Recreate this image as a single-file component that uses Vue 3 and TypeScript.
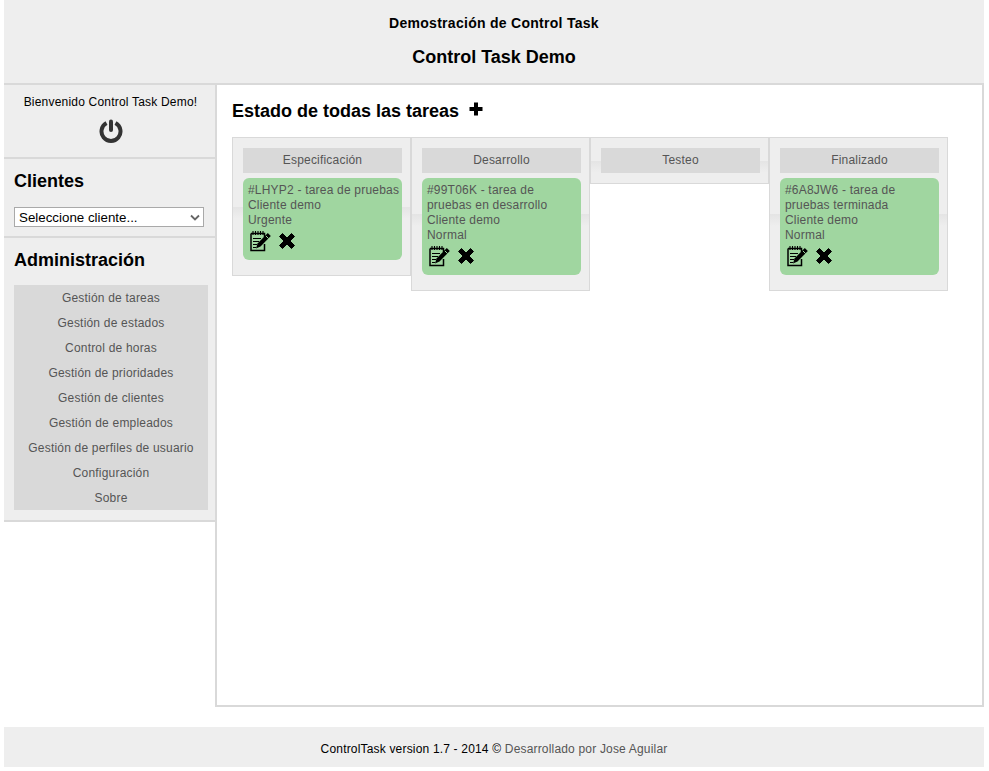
<script setup lang="ts">
type Task = {
  title: string
  client: string
  priority: string
}

type Column = {
  name: string
  tasks: Task[]
}

const adminLinks = [
  'Gestión de tareas',
  'Gestión de estados',
  'Control de horas',
  'Gestión de prioridades',
  'Gestión de clientes',
  'Gestión de empleados',
  'Gestión de perfiles de usuario',
  'Configuración',
  'Sobre',
]

const columns: Column[] = [
  {
    name: 'Especificación',
    tasks: [{ title: '#LHYP2 - tarea de pruebas', client: 'Cliente demo', priority: 'Urgente' }],
  },
  {
    name: 'Desarrollo',
    tasks: [{ title: '#99T06K - tarea de pruebas en desarrollo', client: 'Cliente demo', priority: 'Normal' }],
  },
  { name: 'Testeo', tasks: [] },
  {
    name: 'Finalizado',
    tasks: [{ title: '#6A8JW6 - tarea de pruebas terminada', client: 'Cliente demo', priority: 'Normal' }],
  },
]
</script>

<template>
  <div class="page">
    <header class="top">
      <h1>Demostración de Control Task</h1>
      <h2>Control Task Demo</h2>
    </header>

    <div class="body">
      <aside class="side">
        <section class="welcome">
          <p>Bienvenido Control Task Demo!</p>
          <svg class="power" viewBox="0 0 24 24" width="24" height="24">
            <path
              d="M7.500 4.100 A9.500 9.500 0 1 0 16.500 4.100"
              fill="none"
              stroke="#333"
              stroke-width="4"
            />
            <path d="M12 2.500V11" stroke="#333" stroke-width="4" stroke-linecap="round" />
          </svg>
        </section>

        <section class="clients">
          <h3>Clientes</h3>
          <div class="picker">
            <select>
              <option>Seleccione cliente...</option>
            </select>
            <svg class="chevron" viewBox="0 0 10 7" width="10" height="7">
              <path d="M1 1.500 5 5.500 9 1.500" fill="none" stroke="#666" stroke-width="1.800" />
            </svg>
          </div>
        </section>

        <section class="admin">
          <h3>Administración</h3>
          <nav>
            <a v-for="link in adminLinks" :key="link" href="#">{{ link }}</a>
          </nav>
        </section>
      </aside>

      <main class="content">
        <h2 class="title">
          Estado de todas las tareas
          <svg class="plus" viewBox="0 0 14 14" width="14" height="14">
            <path d="M5 0.500h4v4.500h4.500v4H9v4.500H5V9H0.500V5H5z" fill="#000" />
          </svg>
        </h2>

        <div class="board">
          <section v-for="column in columns" :key="column.name" class="column">
            <h4>{{ column.name }}</h4>
            <article v-for="task in column.tasks" :key="task.title" class="task">
              <div>{{ task.title }}</div>
              <div>{{ task.client }}</div>
              <div>{{ task.priority }}</div>
              <div class="actions">
                <svg viewBox="0 0 22 22" width="22" height="22">
                  <path
                    d="M2 3.500H15.500V7M2 3.500V20.500H15.500V14"
                    fill="none"
                    stroke="#000"
                    stroke-width="1.500"
                  />
                  <path d="M4 1v4M6.500 1v4M9 1v4M11.500 1v4M14 1v4" stroke="#000" stroke-width="1.100" />
                  <path d="M4 8.500h8M4 11.500h6M4 14.500h4M4 17.500h3" stroke="#000" stroke-width="1.200" />
                  <path d="M18.800 3 21.800 6 11.500 16.500 7 18.500 8.500 13.500Z" fill="#000" />
                  <path d="M17 6 19.500 8.500" stroke="#a0d6a0" stroke-width="1" />
                </svg>
                <svg viewBox="0 0 16 16" width="16" height="16">
                  <path
                    d="M3.500 0.500 8 5 12.500 0.500 15.500 3.500 11 8 15.500 12.500 12.500 15.500 8 11 3.500 15.500 0.500 12.500 5 8 0.500 3.500Z"
                    fill="#000"
                    stroke="#000"
                    stroke-linejoin="round"
                  />
                </svg>
              </div>
            </article>
          </section>
        </div>
      </main>
    </div>

    <footer class="foot">
      ControlTask version 1.7 - 2014 &copy; <a href="#">Desarrollado por Jose Aguilar</a>
    </footer>
  </div>
</template>

<style>
html,
body {
  background: #fff;
}
</style>

<style scoped>
.page {
  width: 980px;
  margin-left: 4px;
  font-family: "Liberation Sans", Arial, sans-serif;
  font-size: 12px;
  letter-spacing: 0.2px;
  color: #000;
}

.top {
  height: 83px;
  background: #eee;
  border-bottom: 2px solid #d9d9d9;
  text-align: center;
  overflow: hidden;
}

.top h1 {
  margin: 15px 0 0;
  font-size: 14px;
  line-height: 16px;
  letter-spacing: 0.28px;
}

.top h2 {
  margin: 16px 0 0;
  font-size: 18px;
  line-height: 21px;
  letter-spacing: 0;
}

.body {
  display: flex;
  height: 622px;
}

.side {
  width: 211px;
  flex: none;
  border-right: 2px solid #d9d9d9;
}

.side section {
  background: #eee;
  border-bottom: 2px solid #d9d9d9;
  overflow: hidden;
}

.welcome {
  height: 72px;
  padding-left: 2px;
  text-align: center;
}

.welcome p {
  margin: 10px 0 0;
  line-height: 14px;
}

.power {
  display: block;
  margin: 10px auto 0;
}

.clients {
  height: 77px;
  padding: 0 10px;
}

.side h3 {
  margin: 12px 0 0;
  font-size: 18px;
  line-height: 21px;
  letter-spacing: 0;
}

.picker {
  position: relative;
  width: 190px;
  margin-top: 15px;
}

select {
  display: block;
  width: 100%;
  height: 20px;
  padding: 0 0 0 4px;
  appearance: none;
  font-family: inherit;
  font-size: 13.33px;
  letter-spacing: 0;
  background: #fff;
  border: 1px solid #a9a9a9;
  color: #000;
}

.chevron {
  position: absolute;
  top: 7px;
  right: 4px;
  pointer-events: none;
}

.admin {
  height: 282px;
  padding: 0 7px 0 10px;
}

.admin nav {
  margin-top: 14px;
  background: #d9d9d9;
}

.admin nav a {
  display: block;
  height: 25px;
  line-height: 27px;
  text-align: center;
  color: #555;
  text-decoration: none;
}

.content {
  flex: 1;
  border-right: 2px solid #d9d9d9;
  border-bottom: 2px solid #d9d9d9;
  padding: 0 15px;
}

.title {
  display: flex;
  align-items: center;
  gap: 10px;
  margin: 16px 0 0;
  font-size: 18px;
  line-height: 21px;
  letter-spacing: 0;
}

.plus {
  margin-top: -5px;
}

.board {
  display: flex;
  align-items: flex-start;
  margin-top: 15px;
}

.column {
  width: 179px;
  flex: none;
  box-sizing: border-box;
  padding: 10px 8px 15px 10px;
  background: linear-gradient(to bottom, #eee 50%, #e4e4e4 50%, #eee calc(50% + 12px));
  border: 1px solid #d9d9d9;
}

.column h4 {
  margin: 0;
  height: 25px;
  line-height: 24px;
  background: #d9d9d9;
  color: #555;
  font-size: 12px;
  font-weight: normal;
  text-align: center;
}

.task {
  margin-top: 5px;
  padding: 5px 1px 0 5px;
  background: #a0d6a0;
  border-radius: 6px;
  color: #555;
  line-height: 15px;
}

.actions {
  display: flex;
  align-items: center;
  gap: 8px;
  height: 32px;
  padding: 0 0 7px 1px;
  box-sizing: border-box;
}

.column:nth-child(3) {
  padding-bottom: 10px;
}

.foot {
  height: 40px;
  margin-top: 20px;
  background: #eee;
  line-height: 44px;
  letter-spacing: 0.18px;
  text-align: center;
}

.foot a {
  color: #555;
  text-decoration: none;
}
</style>
